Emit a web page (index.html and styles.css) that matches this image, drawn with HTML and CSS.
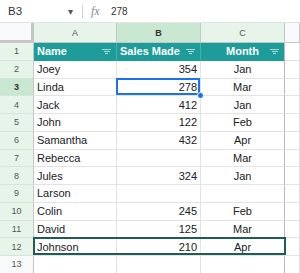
FILE: index.html
```html
<!DOCTYPE html>
<html lang="en">
<head>
    <meta charset="UTF-8">
    <title>Sales sheet</title>
    <link rel="stylesheet" href="styles.css">
</head>
<body>

    <!-- Name box + formula bar -->
    <div class="formula-bar">
        <div class="name-box">B3</div>
        <div class="name-drop">&#9662;</div>
        <div class="bar-sep"></div>
        <div class="fx">fx</div>
        <div class="formula">278</div>
    </div>

    <div class="sheet">
        <!-- Column headings -->
        <div class="row head-row">
            <div class="corner"></div>
            <div class="col-head in-range">A</div>
            <div class="col-head active-col">B</div>
            <div class="col-head in-range">C</div>
            <div class="col-head"></div>
        </div>

        <!-- Table header -->
        <div class="row">
            <div class="row-num">1</div>
            <div class="cell th">Name <span class="filter"><i></i><i></i><i></i></span></div>
            <div class="cell th">Sales Made <span class="filter"><i></i><i></i><i></i></span></div>
            <div class="cell th center">Month <span class="filter"><i></i><i></i><i></i></span></div>
            <div class="cell"></div>
        </div>

        <div class="row">
            <div class="row-num">2</div>
            <div class="cell">Joey</div>
            <div class="cell num">354</div>
            <div class="cell center last">Jan</div>
            <div class="cell"></div>
        </div>
        <div class="row">
            <div class="row-num active-row">3</div>
            <div class="cell">Linda</div>
            <div class="cell num active">278</div>
            <div class="cell center last">Mar</div>
            <div class="cell"></div>
        </div>
        <div class="row">
            <div class="row-num">4</div>
            <div class="cell">Jack</div>
            <div class="cell num">412</div>
            <div class="cell center last">Jan</div>
            <div class="cell"></div>
        </div>
        <div class="row">
            <div class="row-num">5</div>
            <div class="cell">John</div>
            <div class="cell num">122</div>
            <div class="cell center last">Feb</div>
            <div class="cell"></div>
        </div>
        <div class="row">
            <div class="row-num">6</div>
            <div class="cell">Samantha</div>
            <div class="cell num">432</div>
            <div class="cell center last">Apr</div>
            <div class="cell"></div>
        </div>
        <div class="row">
            <div class="row-num">7</div>
            <div class="cell">Rebecca</div>
            <div class="cell num"></div>
            <div class="cell center last">Mar</div>
            <div class="cell"></div>
        </div>
        <div class="row">
            <div class="row-num">8</div>
            <div class="cell">Jules</div>
            <div class="cell num">324</div>
            <div class="cell center last">Jan</div>
            <div class="cell"></div>
        </div>
        <div class="row">
            <div class="row-num">9</div>
            <div class="cell">Larson</div>
            <div class="cell num"></div>
            <div class="cell center last"></div>
            <div class="cell"></div>
        </div>
        <div class="row">
            <div class="row-num">10</div>
            <div class="cell">Colin</div>
            <div class="cell num">245</div>
            <div class="cell center last">Feb</div>
            <div class="cell"></div>
        </div>
        <div class="row">
            <div class="row-num">11</div>
            <div class="cell">David</div>
            <div class="cell num">125</div>
            <div class="cell center last">Mar</div>
            <div class="cell"></div>
        </div>
        <!-- selected range A12:C12 -->
        <div class="row range-row">
            <div class="row-num">12</div>
            <div class="cell">Johnson</div>
            <div class="cell num">210</div>
            <div class="cell center last">Apr</div>
            <div class="cell"></div>
        </div>
        <div class="row">
            <div class="row-num blank">13</div>
            <div class="cell"></div>
            <div class="cell"></div>
            <div class="cell last"></div>
            <div class="cell"></div>
        </div>
    </div>

</body>
</html>
```

FILE: styles.css
```css
/* --- Page --- */
body {
    margin: 0;
    background: #fff;
    font-family: "Liberation Sans", Arial, sans-serif;
    color: #202124;
    overflow: hidden;
}

/* --- Formula bar --- */
.formula-bar {
    display: flex; align-items: center;
    height: 23px;
    border-bottom: 1px solid #e3e3e3;
    box-sizing: border-box;
}
.name-box { font-size: 11.5px; color: #333; padding-left: 8px; width: 60px; }
.name-drop { font-size: 10px; color: #555; width: 14px; }
.bar-sep { width: 1px; height: 13px; background: #d5d5d5; margin-right: 8px; }
.fx {
    font-family: "Liberation Serif", serif; font-style: italic;
    font-size: 12px; color: #8a8a8a; width: 20px;
}
.formula { font-size: 10px; color: #333; }

/* --- Sheet grid --- */
.sheet { display: flex; flex-direction: column; }
.row {
    display: grid;
    grid-template-columns: 34px 83px 84px 84px 1fr;
    height: 17.75px;
}
.head-row { height: 20px; }

.corner {
    background: #f8f9fa;
    border-right: 3px solid #c4c7c5;
    border-bottom: 3px solid #c4c7c5;
}
.col-head {
    display: flex; align-items: center; justify-content: center;
    font-size: 9px; color: #555;
    background: #f8f9fa;
    border-right: 1px solid #c4c7c5;
    border-bottom: 1px solid #c4c7c5;
}
.col-head.in-range { background: #e6f4ea; }
.col-head.active-col { background: #c9e7d1; color: #333; font-weight: bold; }

.row-num {
    display: flex; align-items: center; justify-content: center;
    font-size: 9px; color: #555;
    background: #e6f4ea;
    border-right: 1px solid #c4c7c5;
    border-bottom: 1px solid #d6e4da;
}
.row-num.active-row { background: #c9e7d1; color: #333; font-weight: bold; }
.row-num.blank { background: #f8f9fa; border-bottom-color: #e2e3e3; }

.cell {
    display: flex; align-items: center;
    font-size: 11px;
    padding: 0 3px;
    border-right: 1px solid #e2e3e3;
    border-bottom: 1px solid #e2e3e3;
    white-space: nowrap;
}
.cell.num { justify-content: flex-end; }
.cell.center { justify-content: center; }
.cell.last { border-right-color: #b9bcbb; }

/* --- Table header (teal) --- */
.cell.th {
    position: relative;
    background: #1e9c99;
    color: #fff;
    font-weight: bold;
    border-right-color: #46b0ad;
    border-bottom-color: #1e9c99;
}
.cell.th:nth-child(4) { border-right-color: #b9bcbb; }
.filter {
    position: absolute; right: 5px; top: 6px;
    display: flex; flex-direction: column; align-items: center; gap: 1px;
}
.filter i { display: block; height: 1px; background: #a8dcd8; }
.filter i:nth-child(1) { width: 9px; }
.filter i:nth-child(2) { width: 6px; }
.filter i:nth-child(3) { width: 3px; }

/* --- Active cell B3 --- */
.cell.active { position: relative; }
.cell.active::before {
    content: ""; position: absolute;
    inset: -1px 0 0 -1px;
    border: 2px solid #1a73e8;
}
.cell.active::after {
    content: ""; position: absolute;
    right: -4px; bottom: -4px;
    width: 7px; height: 7px;
    border-radius: 50%;
    background: #1a73e8;
    border: 1px solid #fff;
    box-sizing: border-box;
    z-index: 2;
}

/* --- Selected range row 12 --- */
.range-row { position: relative; }
.range-row::after {
    content: ""; position: absolute;
    left: 33px; top: -1px;
    width: 253px; height: 100%;
    border: 2px solid #1f5c57;
    box-sizing: border-box;
}
```
